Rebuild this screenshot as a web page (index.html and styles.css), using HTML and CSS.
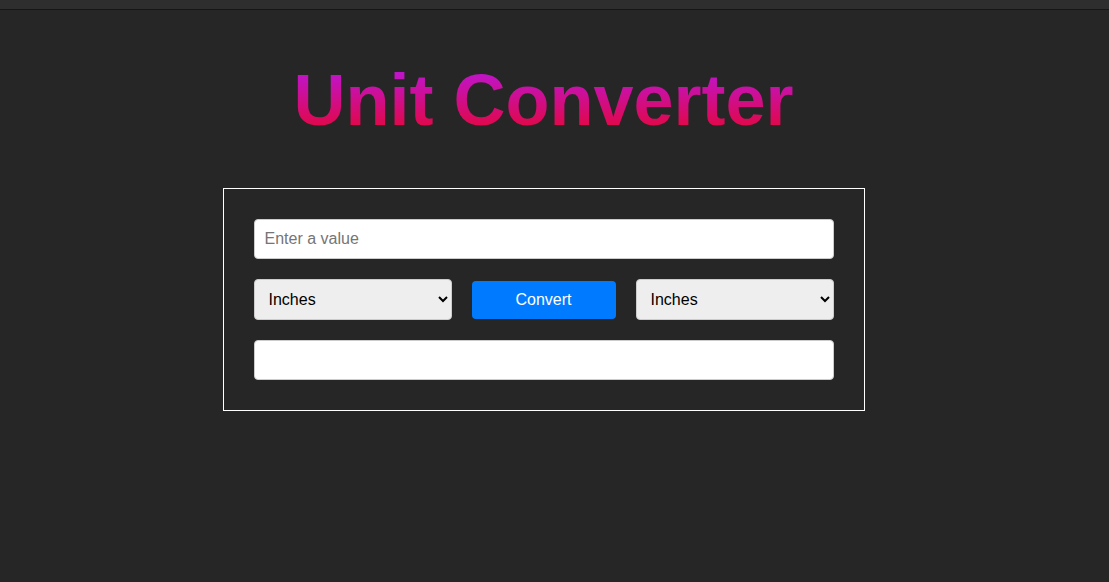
FILE: index.html
```html
<!DOCTYPE html>
<html lang="en">
<head>
<meta charset="utf-8">
<title>Unit Converter</title>
<link rel="stylesheet" href="styles.css">
</head>
<body>
<div class="topbar"></div>
<main class="page">
  <h1 class="title">Unit Converter</h1>
  <section class="converter">
    <input class="field" type="text" placeholder="Enter a value">
    <div class="row">
      <select class="unit">
        <option>Inches</option>
        <option>Feet</option>
        <option>Centimeters</option>
        <option>Meters</option>
      </select>
      <button class="convert" type="button">Convert</button>
      <select class="unit">
        <option>Inches</option>
        <option>Feet</option>
        <option>Centimeters</option>
        <option>Meters</option>
      </select>
    </div>
    <input class="field" type="text" readonly>
  </section>
</main>
</body>
</html>
```

FILE: styles.css
```css
html, body {
  margin: 0;
  padding: 0;
  background: #262626;
  font-family: "Liberation Sans", Arial, sans-serif;
}

.topbar {
  height: 9px;
  background: #2e2e2e;
  border-bottom: 1px solid #161616;
}

.page {
  width: 1087px;
  display: flex;
  flex-direction: column;
  align-items: center;
}

.title {
  margin: 49px 0 47px;
  font-size: 72px;
  font-weight: bold;
  line-height: normal;
  background: linear-gradient(180deg, #c014c8 18%, #e0084a 82%);
  -webkit-background-clip: text;
  background-clip: text;
  color: transparent;
}

.converter {
  width: 580px;
  padding: 30px;
  border: 1px solid #ffffff;
  display: flex;
  flex-direction: column;
  gap: 20px;
}

.field {
  box-sizing: border-box;
  height: 40px;
  width: 100%;
  padding: 0 10px;
  border: 1px solid #cccccc;
  border-radius: 4px;
  background: #ffffff;
  font-family: "Liberation Sans", Arial, sans-serif;
  font-size: 16px;
  color: #222;
}

.field::placeholder {
  color: #757575;
}

.row {
  display: flex;
  align-items: center;
  gap: 20px;
}

.unit {
  box-sizing: border-box;
  width: 198px;
  height: 41px;
  padding: 0 10px;
  border: 1px solid #cccccc;
  border-radius: 4px;
  background-color: #eeeeee;
  font-family: "Liberation Sans", Arial, sans-serif;
  font-size: 16px;
  color: #000;
}

.convert {
  width: 144px;
  height: 38px;
  border: none;
  border-radius: 4px;
  background: #007bff;
  color: #ffffff;
  font-family: "Liberation Sans", Arial, sans-serif;
  font-size: 16px;
  cursor: pointer;
}
```
